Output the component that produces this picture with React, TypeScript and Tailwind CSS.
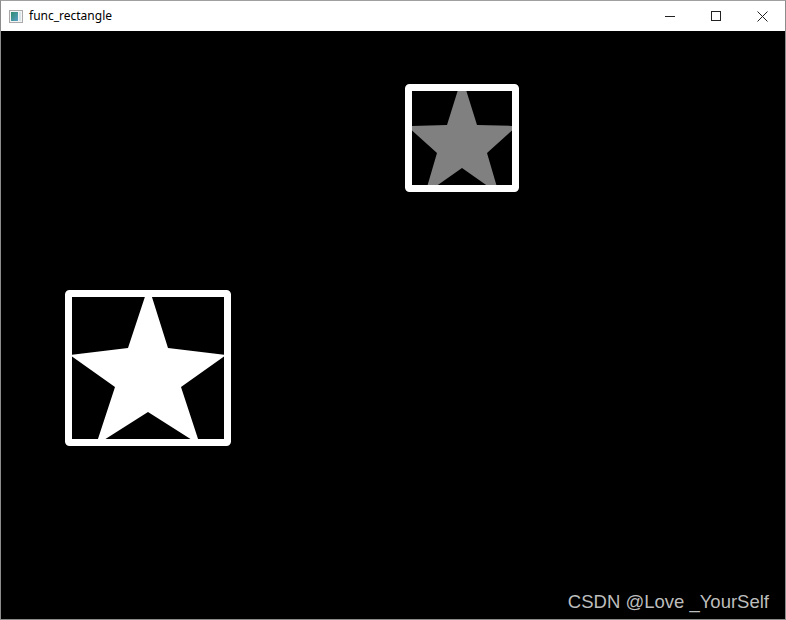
export default function App() {
  return (
    <div className="w-[786px] h-[620px] flex flex-col bg-black border border-[#8c8c8c] border-t-[#a0a0a0] overflow-hidden relative">
      {/* Title bar */}
      <div className="h-[30px] shrink-0 bg-white flex items-center font-['Segoe_UI','Noto_Sans','Liberation_Sans',sans-serif]">
        <svg width="14" height="13" viewBox="0 0 14 13" className="ml-[8px] mr-[6px] mt-[1px]">
          <defs>
            <linearGradient id="ic" x1="0" y1="0" x2="1" y2="1">
              <stop offset="0" stopColor="#2e8b6e" />
              <stop offset="1" stopColor="#5aa0c8" />
            </linearGradient>
          </defs>
          <rect x="0.5" y="0.5" width="13" height="12" fill="#f4f4f4" stroke="#a9a9a9" />
          <rect x="2" y="2" width="7" height="9" fill="url(#ic)" />
          <rect x="10" y="2" width="2" height="9" fill="#d8e6ea" />
        </svg>
        <span className="text-[12px] text-black leading-none">func_rectangle</span>
        <div className="ml-auto flex h-full">
          <div className="w-[46px] h-full flex items-center justify-center">
            <svg width="10" height="10" viewBox="0 0 10 10">
              <path d="M0 5.5h10" stroke="#222" strokeWidth="1" />
            </svg>
          </div>
          <div className="w-[46px] h-full flex items-center justify-center">
            <svg width="10" height="10" viewBox="0 0 10 10">
              <rect x="0.5" y="0.5" width="9" height="9" fill="none" stroke="#222" strokeWidth="1" />
            </svg>
          </div>
          <div className="w-[46px] h-full flex items-center justify-center">
            <svg width="11" height="11" viewBox="0 0 11 11">
              <path d="M0.5 0.5l10 10M10.5 0.5l-10 10" stroke="#222" strokeWidth="1" />
            </svg>
          </div>
        </div>
      </div>

      {/* Image canvas */}
      <div className="flex-1 bg-black">
        <svg width="784" height="588" viewBox="1 31 784 588" className="block">
          <defs>
            <clipPath id="smallIn">
              <rect x="412" y="91" width="100" height="94" />
            </clipPath>
            <clipPath id="bigIn">
              <rect x="72" y="297" width="152" height="142" />
            </clipPath>
          </defs>

          <polygon
            clipPath="url(#smallIn)"
            fill="#808080"
            points="462,77 477,125 517,126 487,153 499,194 462,168 425,194 437,153 407,126 447,125"
          />
          <rect x="408.5" y="87.5" width="107" height="101" rx="1" fill="none" stroke="#ffffff" strokeWidth="7" strokeLinejoin="round" />

          <polygon
            clipPath="url(#bigIn)"
            fill="#ffffff"
            points="148.5,286 168,348 226,355 181,387 200,445 148,412 96,445 115,387 70,355 128,348"
          />
          <rect x="68.5" y="293.5" width="159" height="149" rx="1" fill="none" stroke="#ffffff" strokeWidth="7" strokeLinejoin="round" />
        </svg>
      </div>

      {/* Watermark */}
      <div className="absolute right-[16px] bottom-[8px] text-[18.5px] leading-none text-[#bdbdbd] font-['Liberation_Sans',Arial,sans-serif]">
        CSDN @Love _YourSelf
      </div>
    </div>
  );
}
